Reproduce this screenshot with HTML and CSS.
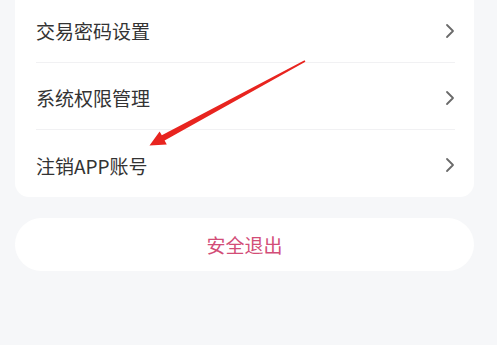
FILE: index.html
```html
<!DOCTYPE html>
<html lang="zh-CN">
<head>
  <meta charset="UTF-8">
  <title>账号与安全</title>
  <link rel="stylesheet" href="styles.css">
</head>
<body>
  <div class="page">
    <!-- settings list -->
    <div class="card">
      <div class="row">
        <span class="rowText">交易密码设置</span>
        <svg class="chevron" viewBox="0 0 10 16"><path d="M2 2 L8 8 L2 14" /></svg>
      </div>
      <div class="row">
        <span class="rowText">系统权限管理</span>
        <svg class="chevron" viewBox="0 0 10 16"><path d="M2 2 L8 8 L2 14" /></svg>
      </div>
      <div class="row">
        <span class="rowText">注销APP账号</span>
        <svg class="chevron" viewBox="0 0 10 16"><path d="M2 2 L8 8 L2 14" /></svg>
      </div>
    </div>

    <div class="logoutBtn">安全退出</div>
  </div>

  <!-- red annotation arrow -->
  <svg class="annotation" width="497" height="345" viewBox="0 0 497 345">
    <polygon points="304.6,60.3 305.4,61.7 164.6,140.4 166.8,144.4 149.5,145.5 159.6,131.4 161.8,135.2" />
  </svg>
</body>
</html>
```

FILE: styles.css
```css
body {
  margin: 0;
  background-color: #f6f7f9;
  font-family: "Noto Sans CJK SC", "Noto Sans", sans-serif;
}
.page {
  padding: 0 23px 0 15px;
}
.card {
  margin-top: -4px;
  background-color: #ffffff;
  border-radius: 0 0 14px 14px;
  padding: 0 19px 0 21px;
}
.row {
  height: 67px;
  display: flex;
  align-items: center;
  justify-content: space-between;
  border-bottom: 1px solid #f1f1f3;
  box-sizing: border-box;
}
.row:last-child {
  border-bottom: none;
}
.rowText {
  font-size: 19px;
  color: #333333;
  padding-top: 3px;
}
.chevron {
  width: 10px;
  height: 16px;
  margin-top: 3px;
}
.chevron path {
  fill: none;
  stroke: #6a6a6a;
  stroke-width: 1.8;
  stroke-linecap: round;
  stroke-linejoin: round;
}
.logoutBtn {
  margin-top: 21px;
  height: 53px;
  border-radius: 27px;
  background-color: #ffffff;
  display: flex;
  align-items: center;
  justify-content: center;
  font-size: 19px;
  color: #d24d77;
}
.annotation {
  position: absolute;
  left: 0;
  top: 0;
  pointer-events: none;
}
.annotation polygon {
  fill: #e8241f;
}
```
